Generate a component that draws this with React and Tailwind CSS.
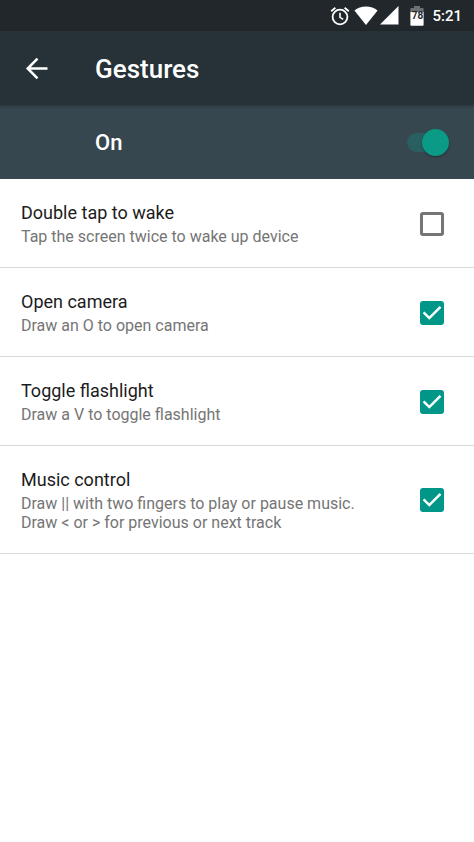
import { useState } from 'react';

const GESTURES = [
  {
    id: 'wake',
    title: 'Double tap to wake',
    summary: ['Tap the screen twice to wake up device'],
    enabled: false,
  },
  {
    id: 'camera',
    title: 'Open camera',
    summary: ['Draw an O to open camera'],
    enabled: true,
  },
  {
    id: 'flashlight',
    title: 'Toggle flashlight',
    summary: ['Draw a V to toggle flashlight'],
    enabled: true,
  },
  {
    id: 'music',
    title: 'Music control',
    summary: ['Draw || with two fingers to play or pause music.', 'Draw < or > for previous or next track'],
    enabled: true,
  },
];

// ── Status bar ────────────────────────────────────────────────────────────────

function StatusBar() {
  return (
    <div className="flex h-[31px] items-center justify-end bg-[#21272b] pr-3 text-white">
      <svg className="mr-1 h-5 w-5" viewBox="0 0 20 20" fill="none" stroke="currentColor" aria-hidden="true">
        <circle cx="10" cy="11" r="7.4" strokeWidth="1.8" />
        <path d="M10 6.8v4.6l3.2 2" strokeWidth="1.6" />
        <path d="M1.2 5.2 5.4 1.7M18.8 5.2l-4.2-3.5" strokeWidth="1.8" />
      </svg>
      <svg className="mr-0.5 h-[19px] w-6" viewBox="0 0 24 19" fill="currentColor" aria-hidden="true">
        <path d="M12 19 .4 4.5C3.6 2 7.6.5 12 .5s8.4 1.5 11.6 4z" />
      </svg>
      <svg className="mr-[11px] h-[19px] w-[19px]" viewBox="0 0 19 19" fill="currentColor" aria-hidden="true">
        <path d="M0 18.5 18.5 0v18.5z" />
      </svg>
      <div className="relative mr-2 h-5 w-[14px]">
        <svg className="h-5 w-[14px]" viewBox="0 0 14 20" aria-hidden="true">
          <path d="M4 0h6v2h3q.6 0 .6 1v3H.4V3q0-1 .6-1h3z" fill="#6b7073" />
          <path d="M.4 6h13.2v13q0 .8-1 .8H1.400q-1 0-1-.8z" fill="#fff" />
        </svg>
        <span className="absolute inset-x-0 top-1 text-center text-[10px] leading-3 font-bold text-[#21272b]">78</span>
      </div>
      <span className="text-[15px] leading-5 font-medium">5:21</span>
    </div>
  );
}

// ── Controls ──────────────────────────────────────────────────────────────────

function MasterSwitch({ checked, onChange }) {
  return (
    <label className="flex h-[74px] cursor-pointer items-center justify-between bg-[#37474f] pr-[25px] pl-[95px]">
      <span className="pt-0.5 text-[22px] leading-7 font-medium text-white">{checked ? 'On' : 'Off'}</span>
      <span className="relative flex h-[27px] w-[42px] items-center">
        <input
          type="checkbox"
          role="switch"
          checked={checked}
          onChange={(e) => onChange(e.target.checked)}
          className="peer h-[19px] w-9 cursor-pointer appearance-none rounded-full bg-[#5c6b73] checked:bg-[#2a5f62]"
        />
        <span className="pointer-events-none absolute top-0 left-0 h-[27px] w-[27px] rounded-full bg-[#b9b9b9] shadow-[0_1px_2px_rgba(0,0,0,0.35)] peer-checked:right-0 peer-checked:left-auto peer-checked:bg-[#0b9a85]" />
      </span>
    </label>
  );
}

function GestureRow({ gesture, checked, onToggle }) {
  return (
    <li className="border-b border-[#d9d9d9]">
      <label className="flex cursor-pointer items-center justify-between gap-4 pt-[22px] pr-[30px] pb-[21px] pl-[21px]">
        <span>
          <span className="mb-0.5 block text-lg leading-6 text-[#1c1c1c]">{gesture.title}</span>
          {gesture.summary.map((line) => (
            <span key={line} className="block text-base leading-[19px] text-[#757575]">{line}</span>
          ))}
        </span>
        <span className="relative h-6 w-6 shrink-0">
          <input
            type="checkbox"
            checked={checked}
            onChange={() => onToggle(gesture.id)}
            className="peer block h-6 w-6 cursor-pointer appearance-none rounded-[3px] border-[3px] border-[#757575] checked:border-[#009688] checked:bg-[#009688]"
          />
          <svg
            className="pointer-events-none absolute inset-0 hidden h-6 w-6 text-white peer-checked:block"
            viewBox="0 0 24 24"
            fill="none"
            stroke="currentColor"
            strokeWidth="2.5"
            aria-hidden="true"
          >
            <path d="m3.6 11.4 5.7 5.7L20.5 5.9" />
          </svg>
        </span>
      </label>
    </li>
  );
}

export default function App() {
  const [on, setOn] = useState(true);
  const [enabled, setEnabled] = useState(() => Object.fromEntries(GESTURES.map((g) => [g.id, g.enabled])));

  const toggle = (id) => setEnabled((prev) => ({ ...prev, [id]: !prev[id] }));

  return (
    <div className="min-h-screen bg-white font-['Roboto',sans-serif]">
      <StatusBar />

      <header className="relative flex h-[74px] items-center bg-[#263238] pl-[25px] shadow-[0_1px_3px_rgba(0,0,0,0.3)]">
        <button type="button" aria-label="Navigate up" className="mr-[46px] cursor-pointer text-white">
          <svg className="h-6 w-6" viewBox="0 0 24 24" fill="none" stroke="currentColor" strokeWidth="2.5" aria-hidden="true">
            <path d="M22.5 12.500H3M12.500 2.700 2.700 12.500l9.800 9.800" />
          </svg>
        </button>
        <h1 className="pt-0.5 text-[26px] leading-8 font-medium text-white">Gestures</h1>
      </header>

      <MasterSwitch checked={on} onChange={setOn} />

      <ul>
        {GESTURES.map((g) => (
          <GestureRow key={g.id} gesture={g} checked={enabled[g.id]} onToggle={toggle} />
        ))}
      </ul>
    </div>
  );
}
